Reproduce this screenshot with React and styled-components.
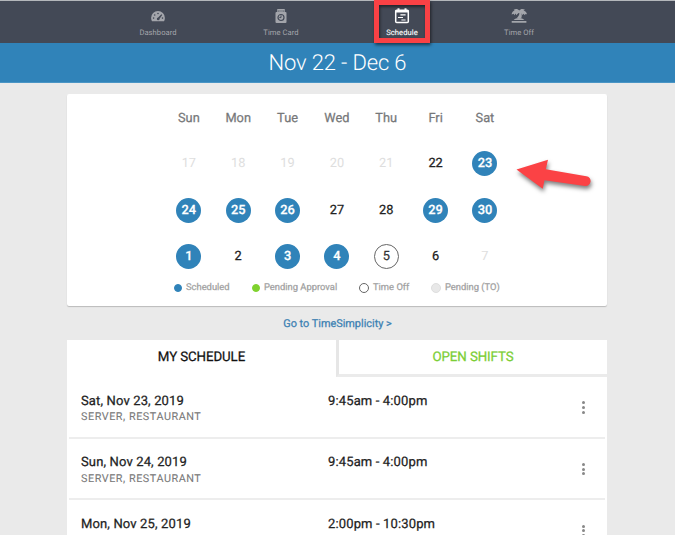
import React from 'react';
import styled, { createGlobalStyle, css } from 'styled-components';

const GlobalStyle = createGlobalStyle`
  *, *::before, *::after { box-sizing: border-box; }
  html, body { margin: 0; height: 535px; overflow: hidden; }
  body { background: #eaeaea; font-family: Roboto, "Liberation Sans", sans-serif; text-rendering: geometricPrecision; }
`;

const semiBold = css`
  font-weight: 400;
  -webkit-text-stroke: 0.25px currentColor;
`;

const Page = styled.div`
  position: relative;
  width: 675px;
  height: 535px;
  overflow: hidden;
  display: flex;
  flex-direction: column;
  background: #eaeaea;
`;

const NavBar = styled.nav`
  height: 43px;
  flex: none;
  padding-left: 98px;
  border-top: 1px solid #b4b7bb;
  background: #434956;
  display: grid;
  grid-template-columns: 120px 126px 116px 118px;
`;

const NavItem = styled.div`
  display: flex;
  flex-direction: column;
  align-items: center;
  padding-top: 6px;
  gap: 3px;
  color: ${(p) => (p.$active ? '#fff' : '#a3a5ab')};
  svg { display: block; width: 18px; height: 18px; }
`;

const NavLabel = styled.span`
  font-size: 7.6px;
  line-height: 9px;
  letter-spacing: 0.05px;
  font-weight: 400;
  ${(p) => p.$active && css`-webkit-text-stroke: 0.1px currentColor;`}
`;

const Banner = styled.header`
  height: 40px;
  flex: none;
  background: #3083b9;
  border-bottom: 1px solid #4a95c5;
  color: #fff;
  font-size: 22px;
  font-weight: 300;
  letter-spacing: -0.15px;
  line-height: 41px;
  text-align: center;
`;

const Card = styled.section`
  width: 540px;
  height: 212px;
  flex: none;
  margin: 11px 0 0 67px;
  background: #fff;
  border-radius: 2px;
  box-shadow: 0 1px 1px rgba(0, 0, 0, 0.2);
`;

const Calendar = styled.div`
  display: grid;
  grid-template-columns: repeat(7, 49.35px);
  grid-template-rows: 46px repeat(3, 46.5px);
  margin-left: 97.2px;
  padding-top: 0.5px;
`;

const Cell = styled.div`
  display: flex;
  align-items: center;
  justify-content: center;
`;

const DayName = styled.span`
  color: #77787a;
  font-size: 12.8px;
  line-height: 15px;
  padding-top: 1px;
  ${semiBold}
`;

const dayStyles = {
  muted: css`color: #dedede; -webkit-text-stroke: 0;`,
  plain: css`color: #222;`,
  scheduled: css`color: #fff; background: #3083b9; font-weight: 500;`,
  off: css`color: #333; border: 1px solid #666;`,
};

const Day = styled.span`
  width: 25px;
  height: 25px;
  border-radius: 50%;
  display: flex;
  align-items: center;
  justify-content: center;
  font-size: 12.8px;
  ${semiBold}
  ${(p) => dayStyles[p.$kind]}
`;

const Legend = styled.div`
  display: grid;
  grid-template-columns: 78px 108px 72px 80px;
  margin: 0.5px 0 0 107px;
`;

const LegendItem = styled.div`
  display: flex;
  align-items: center;
  gap: 4px;
  white-space: nowrap;
  color: #a2a2a2;
  font-size: 9.4px;
  line-height: 14px;
  ${semiBold}
`;

const Dot = styled.i`
  flex: none;
  width: ${(p) => (p.$large ? 10 : 8)}px;
  height: ${(p) => (p.$large ? 10 : 8)}px;
  margin-left: ${(p) => (p.$large ? -1 : 0)}px;
  border-radius: 50%;
  background: ${(p) => p.$fill};
  border: 1px solid ${(p) => p.$line};
`;

const LinkRow = styled.a`
  height: 34px;
  flex: none;
  line-height: 35px;
  text-align: center;
  color: #3a80b2;
  font-size: 10.9px;
  ${semiBold}
`;

const Schedule = styled.section`
  width: 540px;
  height: 195px;
  flex: none;
  margin-left: 67px;
  background: #fff;
`;

const Tabs = styled.div`
  display: grid;
  grid-template-columns: 269px 271px;
  height: 37px;
`;

const Tab = styled.div`
  height: 37px;
  padding-top: 2px;
  line-height: 32px;
  text-align: center;
  font-size: 13.3px;
  letter-spacing: -0.1px;
  ${semiBold}
  color: ${(p) => (p.$open ? '#7bce35' : '#111')};
  ${(p) => p.$open && css`
    border-left: 3px solid #e6e6e6;
    border-bottom: 3px solid #ebebeb;
  `}
`;

const Shift = styled.article`
  display: grid;
  grid-template-columns: 247px 1fr 9px;
  height: 61.7px;
  margin: 0 2px;
  padding: 15.6px 17px 0 12px;
  border-bottom: 2px solid #ededed;
`;

const ShiftMain = styled.div`
  color: #222;
  font-size: 13px;
  line-height: 17px;
  letter-spacing: 0.14px;
  ${semiBold}
`;

const Role = styled.div`
  color: #7a7a7a;
  font-size: 10.8px;
  line-height: 15px;
  font-weight: 400;
  letter-spacing: 0.55px;
  margin-top: -0.5px;
  -webkit-text-stroke: 0.1px currentColor;
`;

const More = styled.button`
  border: 0;
  padding: 8.6px 0 0;
  background: none;
  display: flex;
  flex-direction: column;
  align-items: center;
  gap: 1.7px;
`;

const MoreDot = styled.i`
  width: 3px;
  height: 3px;
  border-radius: 50%;
  background: #888;
`;

const Highlight = styled.div`
  position: absolute;
  left: 374px;
  top: 0;
  width: 56px;
  height: 43px;
  border: 5px solid #fa4145;
  box-shadow: 1px 2px 3px rgba(0, 0, 0, 0.55), inset 1px 2px 3px rgba(0, 0, 0, 0.5);
`;

const Arrow = styled.svg`
  position: absolute;
  left: 507.5px;
  top: 150px;
  filter: drop-shadow(1px 3px 2px rgba(0, 0, 0, 0.5));
`;

const GaugeIcon = () => (
  <svg viewBox="0 0 18 18">
    <path fill="currentColor" d="M3 14.2A7 7 0 0 1 2.1 11 6.9 6.9 0 0 1 9 4.1a6.9 6.9 0 0 1 6.9 6.9 7 7 0 0 1-.9 3.2Z" />
    <g fill="#434956">
      <circle cx="4.6" cy="11.1" r=".8" />
      <circle cx="5.7" cy="8" r=".8" />
      <circle cx="9" cy="6.5" r=".8" />
      <circle cx="13.5" cy="11.1" r=".8" />
      <path d="m12.4 7.2.8.7-2.6 3.8a1.4 1.4 0 1 1-1.5-1.2Z" />
    </g>
  </svg>
);

const TimeClockIcon = () => (
  <svg viewBox="0 0 18 18">
    <path fill="none" stroke="currentColor" strokeWidth="1.3" d="M5.9 5V2.6h6.2V5M7 4.2h4" />
    <rect x="3.5" y="5" width="11" height="11" rx="1" fill="currentColor" />
    <circle cx="9" cy="10.5" r="3" fill="none" stroke="#434956" strokeWidth="1.2" />
    <path fill="none" stroke="#434956" strokeWidth="1" d="M9 8.4v2.2H7.3" />
  </svg>
);

const CalendarIcon = () => (
  <svg viewBox="0 0 18 18">
    <rect x="2.7" y="3.3" width="12.6" height="12.2" rx="1" fill="none" stroke="currentColor" strokeWidth="1.5" />
    <path fill="currentColor" d="M2.5 3h13v2.4h-13ZM4.5 1.2h2V4h-2ZM11.5 1.2h2V4h-2Z" />
    <path stroke="currentColor" strokeWidth="1.2" d="M7.4 7.9h5.2M5 10.5h5M8.4 13h4.2" />
  </svg>
);

const PalmIcon = () => (
  <svg viewBox="0 0 18 18" fill="currentColor">
    <path d="M9.3 3.6C8 1.7 5.1 1.5 3.6 3l1.1.6C3.1 4 1.9 5.4 1.6 7.6l2.2-.8.3 1.4 1.8-1.6.2 1.7L8.6 6h.7c.1 2-.9 3.6-2.8 5.4h4.6c.8-1.5.9-3.4.3-5.1l1.3 2 .5-1.6 1.9 1.6.2-1.4 1.7.4c-.5-2.1-1.8-3.4-3.5-3.7l1.5-.8c-2-1.4-4.6-1.2-5.7.8Z" />
    <path d="M3.6 13.1C5.6 10.2 12.4 10.2 14.4 13.1ZM1.7 13.9h14.7v1.9H1.7Z" />
  </svg>
);

const navItems = [
  { label: 'Dashboard', Icon: GaugeIcon },
  { label: 'Time Card', Icon: TimeClockIcon },
  { label: 'Schedule', Icon: CalendarIcon, active: true },
  { label: 'Time Off', Icon: PalmIcon },
];

const dayNames = ['Sun', 'Mon', 'Tue', 'Wed', 'Thu', 'Fri', 'Sat'];

const days = [
  [17, 'muted'], [18, 'muted'], [19, 'muted'], [20, 'muted'], [21, 'muted'], [22, 'plain'], [23, 'scheduled'],
  [24, 'scheduled'], [25, 'scheduled'], [26, 'scheduled'], [27, 'plain'], [28, 'plain'], [29, 'scheduled'], [30, 'scheduled'],
  [1, 'scheduled'], [2, 'plain'], [3, 'scheduled'], [4, 'scheduled'], [5, 'off'], [6, 'plain'], [7, 'muted'],
];

const legend = [
  { label: 'Scheduled', fill: '#3083b9', line: '#3083b9' },
  { label: 'Pending Approval', fill: '#7fd22e', line: '#7fd22e' },
  { label: 'Time Off', fill: '#fff', line: '#666', large: true },
  { label: 'Pending (TO)', fill: '#e8e8e8', line: '#dedede', large: true },
];

const shifts = [
  { date: 'Sat, Nov 23, 2019', role: 'SERVER, RESTAURANT', time: '9:45am - 4:00pm' },
  { date: 'Sun, Nov 24, 2019', role: 'SERVER, RESTAURANT', time: '9:45am - 4:00pm' },
  { date: 'Mon, Nov 25, 2019', time: '2:00pm - 10:30pm' },
];

export default function App() {
  return (
    <Page>
      <GlobalStyle />
      <NavBar>
        {navItems.map(({ label, Icon, active }) => (
          <NavItem key={label} $active={active}>
            <Icon />
            <NavLabel $active={active}>{label}</NavLabel>
          </NavItem>
        ))}
      </NavBar>
      <Banner>Nov 22 - Dec 6</Banner>
      <Card>
        <Calendar>
          {dayNames.map((name) => (
            <Cell key={name}><DayName>{name}</DayName></Cell>
          ))}
          {days.map(([n, kind]) => (
            <Cell key={n}><Day $kind={kind}>{n}</Day></Cell>
          ))}
        </Calendar>
        <Legend>
          {legend.map((l) => (
            <LegendItem key={l.label}>
              <Dot $fill={l.fill} $line={l.line} $large={l.large} />
              {l.label}
            </LegendItem>
          ))}
        </Legend>
      </Card>
      <LinkRow>Go to TimeSimplicity &gt;</LinkRow>
      <Schedule>
        <Tabs>
          <Tab>MY SCHEDULE</Tab>
          <Tab $open>OPEN SHIFTS</Tab>
        </Tabs>
        {shifts.map((s) => (
          <Shift key={s.date}>
            <ShiftMain>
              {s.date}
              {s.role && <Role>{s.role}</Role>}
            </ShiftMain>
            <ShiftMain>{s.time}</ShiftMain>
            <More aria-label="More options">
              <MoreDot /><MoreDot /><MoreDot />
            </More>
          </Shift>
        ))}
      </Schedule>
      <Highlight />
      <Arrow width="90" height="50" viewBox="0 0 90 50">
        <path fill="#fb4245" d="M8.5 19.5 40 9.7 37.8 19.3 78.4 26.2A4.9 4.9 0 0 1 77 35.9L36.5 30.3 34.7 38.8Z" />
      </Arrow>
    </Page>
  );
}
